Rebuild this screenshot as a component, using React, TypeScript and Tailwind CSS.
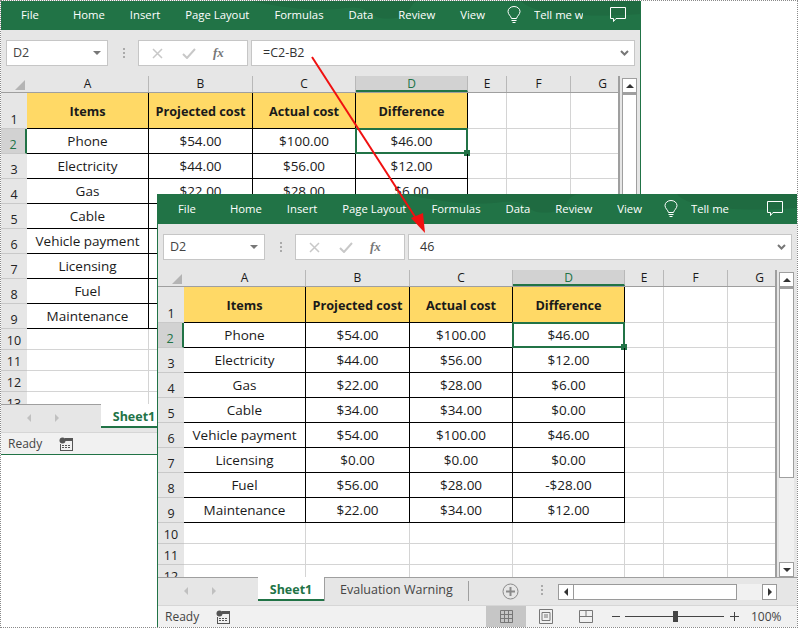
const font = "font-['Open_Sans','Noto_Sans',sans-serif]"

const columns = [
  { name: "A", width: "w-[122px]" },
  { name: "B", width: "w-[104px]" },
  { name: "C", width: "w-[103px]" },
  { name: "D", width: "w-[112px]" },
  { name: "E", width: "w-[39px]" },
  { name: "F", width: "w-[64px]" },
  { name: "G", width: "w-[64px]" },
]

const rows = [
  ["Phone", "$54.00", "$100.00", "$46.00"],
  ["Electricity", "$44.00", "$56.00", "$12.00"],
  ["Gas", "$22.00", "$28.00", "$6.00"],
  ["Cable", "$34.00", "$34.00", "$0.00"],
  ["Vehicle payment", "$54.00", "$100.00", "$46.00"],
  ["Licensing", "$0.00", "$0.00", "$0.00"],
  ["Fuel", "$56.00", "$28.00", "-$28.00"],
  ["Maintenance", "$22.00", "$34.00", "$12.00"],
]

const headers = ["Items", "Projected cost", "Actual cost", "Difference"]
const ribbonTabs = ["Home", "Insert", "Page Layout", "Formulas", "Data", "Review", "View"]

function Ribbon({ tell }: { tell: string }) {
  return (
    <div className="relative h-[30px] shrink-0 overflow-hidden bg-[#217346] text-white">
      <svg className="absolute inset-0 h-full w-full" viewBox="0 0 640 30" preserveAspectRatio="none">
        <path d="M245 0c40 8 70 12 100 8s20 14 50 10c20-3 10-18 30-18z" fill="#1f6b41" />
        <path d="M520 0c10 14 60 18 120 14V0z" fill="#1f6b41" />
      </svg>
      <div className="relative flex h-full items-center pl-[20px] text-[11.3px]">
        <span className="mr-[34px]">File</span>
        <div className="flex gap-[25px]">
          {ribbonTabs.map((tab) => (
            <span key={tab}>{tab}</span>
          ))}
        </div>
        <svg className="ml-[22px] h-[18px] w-[14px]" viewBox="0 0 14 18" fill="none" stroke="#fff" strokeWidth="1">
          <path d="M4.5 12.5C4 10 1 8.5 1 5.5a6 5 0 0 1 12 0c0 3-3 4.500-3.500 7z" />
          <path d="M4.500 14.500h5M5.500 16.500h3" />
        </svg>
        <span className="ml-[13px] w-[49px] overflow-hidden whitespace-nowrap">{tell}</span>
        <svg className="absolute left-[608px] top-[6px] h-[18px] w-[18px]" viewBox="0 0 18 18" fill="none" stroke="#fff" strokeWidth="1">
          <path d="M1.500 1.500h15v11H7l-2.500 3v-3h-3z" />
        </svg>
      </div>
    </div>
  )
}

function FormulaBar({ formula }: { formula: string }) {
  return (
    <div className="flex h-[46px] shrink-0 items-start bg-[#e6e6e6] pl-[5px] pt-[10px] text-[12.5px] text-[#444]">
      <div className="flex h-[26px] w-[102px] items-center justify-between border border-[#c6c6c6] bg-white pl-[6px] pr-[6px]">
        <span>D2</span>
        <span className="h-0 w-0 border-x-[4px] border-t-[4px] border-x-transparent border-t-[#777]" />
      </div>
      <div className="ml-[15px] mr-[13px] mt-[8px] flex flex-col gap-[2px]">
        <span className="h-[2px] w-[2px] bg-[#aaa]" />
        <span className="h-[2px] w-[2px] bg-[#aaa]" />
        <span className="h-[2px] w-[2px] bg-[#aaa]" />
      </div>
      <div className="flex h-[26px] w-[110px] items-center border border-[#c6c6c6] bg-white text-[#bbb]">
        <svg className="ml-[13px] h-[11px] w-[11px]" viewBox="0 0 11 11" stroke="#c8c8c8" strokeWidth="1.500" fill="none">
          <path d="M1 1l9 9M10 1l-9 9" />
        </svg>
        <svg className="ml-[19px] h-[11px] w-[14px]" viewBox="0 0 14 11" stroke="#c8c8c8" strokeWidth="2" fill="none">
          <path d="M1 6l4 4 8-9" />
        </svg>
        <span className="ml-[17px] font-['Liberation_Serif',serif] text-[13px] font-bold italic text-[#777]">fx</span>
      </div>
      <div className="ml-[3px] flex h-[26px] w-[384px] items-center justify-between border border-[#c6c6c6] bg-white pl-[11px] pr-[5px] text-[#333]">
        <span>{formula}</span>
        <svg className="h-[6px] w-[9px]" viewBox="0 0 9 6" stroke="#777" strokeWidth="2" fill="none">
          <path d="M1 1l3.500 3.500L8 1" />
        </svg>
      </div>
    </div>
  )
}

function ScrollArrow({ dir }: { dir: "up" | "down" }) {
  return (
    <div className="flex h-[15px] w-[15px] shrink-0 items-center justify-center border border-[#9f9f9f] bg-white">
      <span
        className={
          dir === "up"
            ? "h-0 w-0 border-x-[4px] border-b-[4px] border-x-transparent border-b-[#333]"
            : "h-0 w-0 border-x-[4px] border-t-[4px] border-x-transparent border-t-[#333]"
        }
      />
    </div>
  )
}

function RowHeader({ label, height, selected }: { label: number; height: string; selected?: boolean }) {
  return (
    <div
      className={`flex w-[26px] shrink-0 items-end justify-center border-b border-[#c9c9c9] pb-[1px] text-[12.5px] leading-[15px] ${height} ${
        selected ? "border-r-2 border-r-[#217346] bg-[#d2d2d2] text-[#217346]" : "bg-[#e6e6e6] text-[#222]"
      }`}
    >
      {label}
    </div>
  )
}

function EmptyCells({ from, height }: { from: number; height: string }) {
  return (
    <>
      {columns.slice(from).map((col) => (
        <div key={col.name} className={`shrink-0 border-b border-r border-[#d4d4d4] bg-white ${col.width} ${height}`} />
      ))}
    </>
  )
}

function Sheet({ height }: { height: string }) {
  return (
    <div className={`relative w-[619px] shrink-0 overflow-hidden border-r-2 border-[#9f9f9f] bg-white text-[#1a1a1a] ${height}`}>
      <div className="flex h-[17px] border-b border-[#9f9f9f] text-[12px] leading-[16px]">
        <div className="w-[26px] shrink-0 bg-[#e6e6e6] pl-[14px] pt-[4px]">
          <span className="block h-0 w-0 border-b-[10px] border-l-[10px] border-b-[#b4b4b4] border-l-transparent" />
        </div>
        {columns.map((col) => (
          <div
            key={col.name}
            className={`shrink-0 border-r border-[#b8b8b8] text-center ${col.width} ${
              col.name === "D" ? "border-b-2 border-b-[#217346] bg-[#d2d2d2] text-[#217346]" : "bg-[#e6e6e6]"
            }`}
          >
            {col.name}
          </div>
        ))}
      </div>

      <div className="flex">
        <RowHeader label={1} height="h-[36px]" />
        {headers.map((title, i) => (
          <div
            key={title}
            className={`flex h-[36px] shrink-0 items-center justify-center border-b border-r border-black bg-[#ffd966] pt-[2px] text-[12.7px] font-bold ${columns[i].width}`}
          >
            {title}
          </div>
        ))}
        <EmptyCells from={4} height="h-[36px]" />
      </div>

      {rows.map((row, r) => (
        <div key={row[0]} className="flex">
          <RowHeader label={r + 2} height="h-[25px]" selected={r === 0} />
          {row.map((value, c) => (
            <div
              key={c}
              className={`relative flex h-[25px] shrink-0 items-center justify-center border-b border-r border-black pt-[1px] text-[13.5px] ${columns[c].width}`}
            >
              {value}
              {r === 0 && c === 3 && (
                <span className="absolute -left-[1px] -top-[1px] -right-[1px] -bottom-[1px] border-2 border-[#217346]">
                  <span className="absolute -bottom-[4px] -right-[4px] h-[6px] w-[6px] bg-[#217346]" />
                </span>
              )}
            </div>
          ))}
          <EmptyCells from={4} height="h-[25px]" />
        </div>
      ))}

      {[10, 11, 12, 13].map((n) => (
        <div key={n} className="flex">
          <RowHeader label={n} height="h-[21px]" />
          <EmptyCells from={0} height="h-[21px]" />
        </div>
      ))}
    </div>
  )
}

function VerticalScroll() {
  return (
    <div className="flex flex-1 flex-col bg-[#e6e6e6] pl-[2px] pt-[2px]">
      <ScrollArrow dir="up" />
      <div className="flex flex-1 w-[15px] flex-col bg-[#f1f1f1]">
        <div className="h-[191px] border-x border-b border-t-2 border-[#9f9f9f] bg-white" />
      </div>
      <ScrollArrow dir="down" />
    </div>
  )
}

function TabBar() {
  return (
    <div className="relative flex h-[28px] shrink-0 border-t border-[#9f9f9f] bg-[#e6e6e6] text-[12.5px]">
      <div className="flex w-[100px] shrink-0 items-center gap-[24px] pl-[26px] pb-[2px]">
        <span className="h-0 w-0 border-y-[4px] border-r-[4px] border-y-transparent border-r-[#c0c0c0]" />
        <span className="h-0 w-0 border-y-[4px] border-l-[4px] border-y-transparent border-l-[#c0c0c0]" />
      </div>
      <div className="-mt-[1px] h-[24px] w-[66px] shrink-0 border-b-2 border-[#217346] bg-white pt-[4px] text-center font-bold text-[#217346]">
        Sheet1
      </div>
      <div className="-mt-[1px] flex h-[24px] w-[144px] shrink-0 items-center border-l border-t border-[#9f9f9f] pl-[15px] pt-[2px] text-[#444]">
        <span className="whitespace-nowrap">Evaluation Warning</span>
      </div>
      <div className="mt-[3px] h-[20px] w-px shrink-0 bg-[#9f9f9f]" />
      <svg className="ml-[33px] mt-[5px] h-[17px] w-[17px] shrink-0" viewBox="0 0 17 17" fill="none" stroke="#8a8a8a">
        <circle cx="8.500" cy="8.500" r="7.500" />
        <path d="M8.500 4v9M4 8.500h9" strokeWidth="2" />
      </svg>
      <div className="ml-[22px] mt-[7px] flex flex-col gap-[2px]">
        <span className="h-[2px] w-[2px] bg-[#aaa]" />
        <span className="h-[2px] w-[2px] bg-[#aaa]" />
        <span className="h-[2px] w-[2px] bg-[#aaa]" />
      </div>
      <div className="ml-[15px] mt-[6px] flex h-[16px]">
        <div className="flex w-[16px] items-center justify-center border border-[#9a9a9a] bg-white">
          <span className="h-0 w-0 border-y-[4px] border-r-[4px] border-y-transparent border-r-[#333]" />
        </div>
        <div className="w-[163px] border-y border-r border-[#9a9a9a] bg-white" />
        <div className="w-[25px] bg-[#f1f1f1]" />
        <div className="flex w-[15px] items-center justify-center border border-[#9a9a9a] bg-white">
          <span className="h-0 w-0 border-y-[4px] border-l-[4px] border-y-transparent border-l-[#333]" />
        </div>
      </div>
    </div>
  )
}

function StatusBar() {
  return (
    <div className="flex h-[22px] shrink-0 items-center border-t border-[#d6d6d6] bg-[#f1f1f1] pl-[7px] text-[12px] text-[#444]">
      <span className="w-[31px]">Ready</span>
      <svg className="ml-[20px] h-[14px] w-[14px] shrink-0" viewBox="0 0 14 14" fill="#555">
        <circle cx="3.500" cy="3.500" r="3" />
        <path d="M6 1h8v13H1V7h1v6h11V4H6z" />
        <path d="M3 8h2v1H3zM6 8h2v1H6zM9 8h2v1H9zM3 10h2v1H3zM6 10h2v1H6zM9 10h2v1H9z" />
      </svg>
      <div className="ml-[256px] flex h-full w-[40px] shrink-0 items-center justify-center bg-[#c6c6c6]">
        <svg className="h-[13px] w-[13px]" viewBox="0 0 13 13" fill="none" stroke="#777">
          <path d="M.5.500h12v12H.5zM4.500.500v12M8.500.500v12M.5 4.500h12M.5 8.500h12" />
        </svg>
      </div>
      <svg className="ml-[13px] h-[15px] w-[14px] shrink-0" viewBox="0 0 14 15" fill="none" stroke="#777">
        <path d="M.5.500h13v14H.5zM3 3.500h8v8H3zM5 6h4M5 8h4" />
      </svg>
      <svg className="ml-[26px] h-[13px] w-[14px] shrink-0" viewBox="0 0 14 13" fill="none" stroke="#777">
        <path d="M.5 12.500V.5h13v12zM7 .5v6H.5M7 6.500h6.500" />
      </svg>
      <span className="ml-[19px] h-px w-[8px] shrink-0 bg-[#444]" />
      <div className="relative ml-[5px] h-px w-[99px] shrink-0 bg-[#444]">
        <span className="absolute -top-[5px] left-[48px] h-[11px] w-[5px] bg-[#444]" />
      </div>
      <svg className="ml-[6px] h-[9px] w-[9px] shrink-0" viewBox="0 0 9 9" stroke="#444" fill="none">
        <path d="M0 4.500h9M4.500 0v9" />
      </svg>
      <span className="ml-[12px] whitespace-nowrap">100%</span>
    </div>
  )
}

function ExcelWindow({
  formula,
  tell,
  sheetHeight,
  className,
}: {
  formula: string
  tell: string
  sheetHeight: string
  className: string
}) {
  return (
    <div className={`absolute flex w-[640px] flex-col overflow-hidden border-[#217346] bg-white ${font} ${className}`}>
      <Ribbon tell={tell} />
      <FormulaBar formula={formula} />
      <div className="flex">
        <Sheet height={sheetHeight} />
        <VerticalScroll />
      </div>
      <TabBar />
      <StatusBar />
    </div>
  )
}

export default function App() {
  return (
    <div className="relative h-[628px] w-[798px] overflow-hidden border border-dotted border-[#8a8a8a] bg-white">
      <ExcelWindow
        formula="=C2-B2"
        tell="Tell me w"
        sheetHeight="h-[328px]"
        className="left-0 -top-[1px] border-b border-r"
      />
      <ExcelWindow formula="46" tell="Tell me" sheetHeight="h-[307px]" className="left-[156px] top-[193px] border-l" />
      <svg className="pointer-events-none absolute -left-[1px] -top-[1px] h-[628px] w-[798px]" viewBox="0 0 798 628" fill="none">
        <path d="M312 57L419 223" stroke="#f01010" strokeWidth="2" />
        <path d="M425 233l-14-15 12-5z" fill="#f01010" />
      </svg>
    </div>
  )
}
